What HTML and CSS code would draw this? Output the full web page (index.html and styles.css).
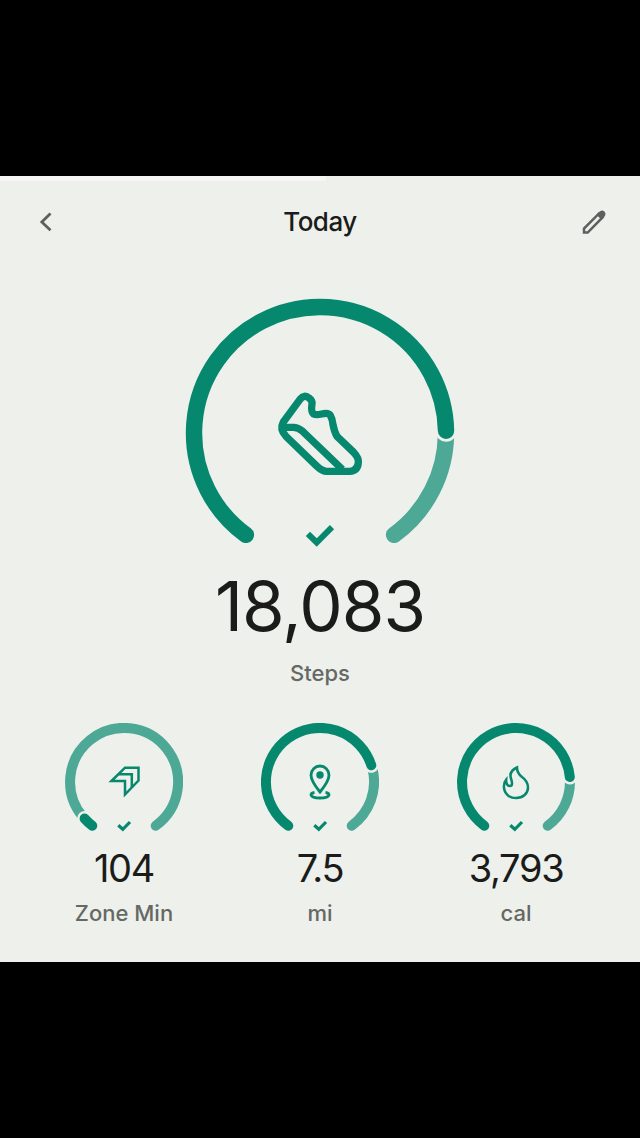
FILE: index.html
```html
<!DOCTYPE html>
<html lang="en">
<head>
  <meta charset="UTF-8" />
  <meta name="viewport" content="width=device-width, initial-scale=1" />
  <title>Today</title>
  <link rel="stylesheet" href="styles.css">
</head>
<body>
  <div class="panel">
    <div class="loader"></div>
    <header class="header">
      <svg class="icon" viewBox="0 0 28 28">
        <path class="nav-line" d="M18.5 5.5 9.8 13.9l8.7 8.4" />
      </svg>
      <h1>Today</h1>
      <svg class="icon" viewBox="0 0 28 28">
        <path class="pencil" d="M4 24.500v-4L18.800 5.700l3.700 3.700L7.700 24.500z" />
        <path class="pencil-tip" d="M16.500 6.800 20 3.300q2.400-1.500 4.400.3t.6 4.300L21.300 11.600z" />
      </svg>
    </header>

    <section class="main-stat">
      <svg class="gauge-big" viewBox="0 0 270 270">
        <path class="over" d="M261 136A126 126 0 0 1 209.100 236.900" />
        <path class="gap" d="M60.900 236.900A126 126 0 1 1 261 133" />
        <path class="done" d="M60.900 236.900A126 126 0 1 1 261 132.700" />
        <g class="shoe" transform="translate(80 82) scale(.33333)">
          <path d="M55 126 105 58Q118 42 132 54Q143 62 141 72Q137 95 146 102Q153 106 170 102Q190 97 196 106Q202 116 204 134Q208 156 216 169L265 216Q282 234 280 248Q278 273 254 274H185Q172 274 155 258L63 169Q43 148 55 126Z" />
          <path d="M58 142H83Q98 141 113 154L232 268" />
        </g>
        <path class="check" d="M122.900 235.800 131.700 244.500 147 229.200" />
      </svg>
      <div class="value">18,083</div>
      <div class="label">Steps</div>
    </section>

    <section class="stats">
      <div class="stat">
        <svg class="gauge" viewBox="0 0 118 118">
          <path class="over" d="M18.300 94.300A54 54 0 1 1 90.700 102.700" />
          <path class="gap" d="M27.300 102.700A54 54 0 0 1 19.600 95.600" />
          <path class="done" d="M27.300 102.700A54 54 0 0 1 19.600 95.600" />
          <g class="line thin">
            <path d="M46.500 58 60 44.700H73.500V57.500L60 71.500V58Z" />
            <path d="M53.500 51.300H66.800V64.500" />
          </g>
          <path class="check" d="M53.300 102.300 57.800 106.300 65 99" />
        </svg>
        <div class="value">104</div>
        <div class="label">Zone Min</div>
      </div>
      <div class="stat">
        <svg class="gauge" viewBox="0 0 118 118">
          <path class="over" d="M111.500 46A54 54 0 0 1 90.700 102.700" />
          <path class="gap" d="M27.300 102.700A54 54 0 1 1 110.300 42.300" />
          <path class="done" d="M27.300 102.700A54 54 0 1 1 110.300 42.300" />
          <g class="line">
            <path d="M59 69Q50 58 50 52A9 9 0 0 1 68 52Q68 58 59 69Z" />
            <path d="M53.500 69.500Q50 70 50 72Q51 75 59 75Q67 75 68 72Q68 70 64.500 69.500" />
          </g>
          <circle class="dot" cx="59" cy="52" r="3.700" />
          <path class="check" d="M53.300 102.300 57.800 106.300 65 99" />
        </svg>
        <div class="value">7.5</div>
        <div class="label">mi</div>
      </div>
      <div class="stat">
        <svg class="gauge" viewBox="0 0 118 118">
          <path class="over" d="M112.900 57A54 54 0 0 1 90.700 102.700" />
          <path class="gap" d="M27.300 102.700A54 54 0 1 1 112.800 54" />
          <path class="done" d="M27.300 102.700A54 54 0 1 1 112.800 54" />
          <path class="line thin" d="M60 44.500C54.500 47 52.500 51 54 55.500C55.500 60 55.500 63 53 63C50 63 49 60 49.200 56.500C47 59 46.700 62 47 65C48 71.500 53 75 59 75C66 75 71 70.500 71 64.500C71 59 68.500 56.500 65 54C61 51 60 48.500 60 44.500Z" />
          <path class="check" d="M53.300 102.300 57.800 106.300 65 99" />
        </svg>
        <div class="value">3,793</div>
        <div class="label">cal</div>
      </div>
    </section>
  </div>
</body>
</html>
```
FILE: styles.css
```css
* { margin: 0; padding: 0; box-sizing: border-box; }
body {
  font-family: Inter, 'Liberation Sans', sans-serif;
  background: #000;
  color: #1b1c1a;
  min-height: 1138px;
  padding: 176px 0;
}
.panel {
  height: 786px;
  background: #edf0eb;
}
.loader {
  width: 326px;
  height: 5px;
  background: #f6f7f5;
}
.header {
  display: flex;
  align-items: center;
  justify-content: space-between;
  height: 82px;
  padding: 0 32px;
}
.header h1 {
  padding-bottom: 2px;
  font-size: 26px;
  font-weight: 500;
  letter-spacing: -0.5px;
}
.icon { width: 28px; height: 28px; }
.nav-line, .pencil {
  fill: none;
  stroke: #5d605c;
  stroke-width: 2.8;
}
.pencil { stroke-width: 2.5; }
.pencil-tip { fill: #5d605c; }
.main-stat {
  display: flex;
  flex-direction: column;
  align-items: center;
  padding-top: 35px;
}
.gauge-big { width: 270px; height: 270px; }
.gauge-big path, .gauge path {
  fill: none;
  stroke: #06886f;
}
.gauge-big .over, .gauge-big .done {
  stroke-width: 16.4;
  stroke-linecap: round;
}
.gauge-big .gap {
  stroke-width: 21.5;
  stroke-linecap: round;
}
.gauge .over, .gauge .done {
  stroke-width: 10;
  stroke-linecap: round;
}
.gauge .gap {
  stroke-width: 15;
  stroke-linecap: round;
}
.gauge-big .over, .gauge .over { stroke: #4da896; }
.gauge-big .gap, .gauge .gap { stroke: #edf0eb; }
.gauge-big .shoe path {
  stroke-width: 22;
  stroke-linejoin: round;
}
.gauge-big .check { stroke-width: 6; }
.gauge .check { stroke-width: 3.2; }
.gauge .line, .gauge .line path { stroke-width: 2.8; }
.gauge .thin, .gauge .thin path { stroke-width: 2.5; }
.dot { fill: #06886f; }
.value { white-space: nowrap; }
.label {
  color: #656864;
  font-size: 22px;
  font-weight: 500;
  line-height: 28px;
}
.main-stat .value {
  margin-top: -2px;
  font-size: 69px;
  line-height: 80px;
  letter-spacing: -1px;
}
.main-stat .label { margin-top: 13px; }
.stats {
  display: flex;
  padding: 36px 26px 0;
}
.stat {
  display: flex;
  flex: 1;
  flex-direction: column;
  align-items: center;
}
.gauge { width: 118px; height: 118px; }
.stat .value {
  margin-top: 7px;
  font-size: 38px;
  line-height: 40px;
  letter-spacing: -1.3px;
}
.stat .label { margin-top: 11px; }
```
